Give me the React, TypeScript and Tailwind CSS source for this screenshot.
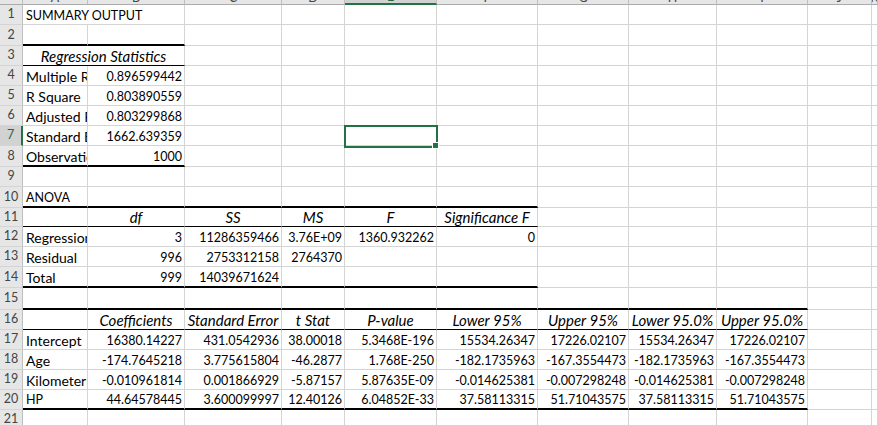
import React from 'react';

type Cell = { t: string; a?: 'l' | 'r' | 'c'; i?: boolean; span?: number; ov?: boolean; caps?: boolean };
type Row = { h: number; cells?: Record<number, Cell>; b?: { k: 'thick' | 'thin'; to: number } };

const LETTERS = ['A', 'B', 'C', 'D', 'E', 'F', 'G', 'H', 'I', 'J', 'K'];
const WIDTHS = [
  'w-[65px]',
  'w-[97px]',
  'w-[97px]',
  'w-[63px]',
  'w-[92px]',
  'w-[101px]',
  'w-[91px]',
  'w-[88px]',
  'w-[91px]',
  'w-[64px]',
  'flex-1',
];
const HEIGHTS: Record<number, string> = {
  19: 'h-[19px]',
  20: 'h-[20px]',
  21: 'h-[21px]',
  22: 'h-[22px]',
};

const L = (t: string): Cell => ({ t, a: 'l' });
const C = (t: string): Cell => ({ t, a: 'l', caps: true });
const N = (t: string): Cell => ({ t, a: 'r' });
const I = (t: string): Cell => ({ t, a: 'c', i: true });

const ROWS: Row[] = [
  { h: 20, cells: { 0: { t: 'SUMMARY OUTPUT', a: 'l', ov: true, caps: true } } },
  { h: 21, b: { k: 'thick', to: 1 } },
  { h: 20, cells: { 0: { t: 'Regression Statistics', a: 'c', i: true, span: 2 } }, b: { k: 'thin', to: 1 } },
  { h: 20, cells: { 0: L('Multiple R'), 1: N('0.896599442') } },
  { h: 20, cells: { 0: L('R Square'), 1: N('0.803890559') } },
  { h: 20, cells: { 0: L('Adjusted R Square'), 1: N('0.803299868') } },
  { h: 20, cells: { 0: L('Standard Error'), 1: N('1662.639359') } },
  { h: 21, cells: { 0: L('Observations'), 1: N('1000') }, b: { k: 'thick', to: 1 } },
  { h: 20 },
  { h: 21, cells: { 0: C('ANOVA') }, b: { k: 'thick', to: 5 } },
  { h: 19, cells: { 1: I('df'), 2: I('SS'), 3: I('MS'), 4: I('F'), 5: I('Significance F') }, b: { k: 'thin', to: 5 } },
  {
    h: 20,
    cells: { 0: L('Regression'), 1: N('3'), 2: N('11286359466'), 3: N('3.76E+09'), 4: N('1360.932262'), 5: N('0') },
  },
  { h: 20, cells: { 0: L('Residual'), 1: N('996'), 2: N('2753312158'), 3: N('2764370') } },
  { h: 21, cells: { 0: L('Total'), 1: N('999'), 2: N('14039671624') }, b: { k: 'thick', to: 5 } },
  { h: 22, b: { k: 'thick', to: 8 } },
  {
    h: 20,
    cells: {
      1: I('Coefficients'),
      2: I('Standard Error'),
      3: I('t Stat'),
      4: I('P-value'),
      5: I('Lower 95%'),
      6: I('Upper 95%'),
      7: I('Lower 95.0%'),
      8: I('Upper 95.0%'),
    },
    b: { k: 'thin', to: 8 },
  },
  {
    h: 20,
    cells: {
      0: L('Intercept'),
      1: N('16380.14227'),
      2: N('431.0542936'),
      3: N('38.00018'),
      4: N('5.3468E-196'),
      5: N('15534.26347'),
      6: N('17226.02107'),
      7: N('15534.26347'),
      8: N('17226.02107'),
    },
  },
  {
    h: 20,
    cells: {
      0: L('Age'),
      1: N('-174.7645218'),
      2: N('3.775615804'),
      3: N('-46.2877'),
      4: N('1.768E-250'),
      5: N('-182.1735963'),
      6: N('-167.3554473'),
      7: N('-182.1735963'),
      8: N('-167.3554473'),
    },
  },
  {
    h: 20,
    cells: {
      0: L('Kilometer'),
      1: N('-0.010961814'),
      2: N('0.001866929'),
      3: N('-5.87157'),
      4: N('5.87635E-09'),
      5: N('-0.014625381'),
      6: N('-0.007298248'),
      7: N('-0.014625381'),
      8: N('-0.007298248'),
    },
  },
  {
    h: 20,
    cells: {
      0: C('HP'),
      1: N('44.64578445'),
      2: N('3.600099997'),
      3: N('12.40126'),
      4: N('6.04852E-33'),
      5: N('37.58113315'),
      6: N('51.71043575'),
      7: N('37.58113315'),
      8: N('51.71043575'),
    },
    b: { k: 'thick', to: 8 },
  },
  { h: 20 },
];

const SELECTED_ROW = 7;
const SELECTED_COL = 4;

function ColumnHeaders() {
  return (
    <div className="flex h-[5px]">
      <div className="w-[23px] shrink-0 bg-[#e6e6e6] border-r border-b border-r-[#bfbfbf] border-b-[#ababab]" />
      {LETTERS.map((l, c) => (
        <div
          key={l}
          className={`${WIDTHS[c]} shrink-0 overflow-hidden flex items-end justify-center border-r border-r-[#bfbfbf] ${
            c === SELECTED_COL
              ? 'bg-[#d2d2d2] border-b-2 border-b-[#217346] text-[#1d6b40]'
              : 'bg-[#e6e6e6] border-b border-b-[#ababab] text-[#444]'
          }`}
        >
          <span className="leading-[12px]">{l}</span>
        </div>
      ))}
    </div>
  );
}

// Lato is narrower than Calibri in lower case, so labels and italic headers run a bit larger
function textSize(cell: Cell) {
  if (cell.i) return 'text-[15px] italic pb-[2px]';
  if (cell.a === 'r' || cell.caps) return 'text-[12.5px] pb-[1px]';
  return 'text-[14px] pb-[1px]';
}

function SheetRow({ row, n }: { row: Row; n: number }) {
  const cells: React.ReactNode[] = [];
  for (let c = 0; c < LETTERS.length; c++) {
    const cell = row.cells?.[c];
    const bottom =
      row.b && c + (cell?.span ? cell.span - 1 : 0) <= row.b.to
        ? row.b.k === 'thick'
          ? 'border-b-2 border-b-black'
          : 'border-b border-b-black'
        : 'border-b border-b-[#d4d4d4]';
    const right = cell?.ov ? 'overflow-visible' : 'border-r border-r-[#d4d4d4] overflow-hidden';
    const align =
      cell?.a === 'r' ? 'justify-end pr-[2px]' : cell?.a === 'c' ? 'justify-center' : 'justify-start pl-[3px]';
    const width = cell?.span === 2 ? 'w-[162px]' : WIDTHS[c];
    cells.push(
      <div
        key={c}
        className={`${width} shrink-0 flex items-end leading-[14px] whitespace-nowrap ${right} ${bottom} ${align} ${
          cell ? textSize(cell) : ''
        }`}
      >
        {cell && <span className="shrink-0">{cell.t}</span>}
      </div>
    );
    if (cell?.span === 2) c++;
  }
  const sel = n === SELECTED_ROW;
  return (
    <div className={`flex ${HEIGHTS[row.h]}`}>
      <div
        className={`w-[23px] shrink-0 flex items-center justify-center border-b border-b-[#d4d4d4] ${
          sel ? 'bg-[#d2d2d2] border-r-2 border-r-[#217346] text-[#1d6b40]' : 'bg-[#e6e6e6] border-r border-r-[#bfbfbf] text-[#444]'
        }`}
      >
        {n}
      </div>
      {cells}
    </div>
  );
}

export default function App() {
  return (
    <div className="relative w-[878px] h-[425px] overflow-hidden bg-white text-black text-[12.5px] font-['Lato',sans-serif]">
      <ColumnHeaders />
      {ROWS.map((r, i) => (
        <SheetRow key={i} row={r} n={i + 1} />
      ))}
      {/* active cell E7 */}
      <div className="absolute left-[344px] top-[125px] w-[94px] h-[23px] border-2 border-[#217346]" />
      <div className="absolute left-[432px] top-[142px] w-[7px] h-[7px] bg-[#217346] border border-white" />
    </div>
  );
}
